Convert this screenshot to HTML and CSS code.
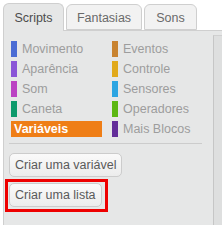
FILE: index.html
```html
<!DOCTYPE html>
<html>
<head>
<meta charset="utf-8">
<link rel="stylesheet" href="styles.css">
</head>
<body>
<div class="app">
  <div class="tabs">
    <div class="tab active">Scripts</div>
    <div class="tab wide">Fantasias</div>
    <div class="tab narrow">Sons</div>
  </div>
  <div class="panel">
    <div class="content">
      <div class="cats">
        <div class="cat"><span class="bar c-motion"></span>Movimento</div>
        <div class="cat"><span class="bar c-events"></span>Eventos</div>
        <div class="cat"><span class="bar c-looks"></span>Aparência</div>
        <div class="cat"><span class="bar c-control"></span>Controle</div>
        <div class="cat"><span class="bar c-sound"></span>Som</div>
        <div class="cat"><span class="bar c-sensing"></span>Sensores</div>
        <div class="cat"><span class="bar c-pen"></span>Caneta</div>
        <div class="cat"><span class="bar c-ops"></span>Operadores</div>
        <div class="cat selected">Variáveis</div>
        <div class="cat"><span class="bar c-more"></span>Mais Blocos</div>
      </div>
      <div class="sep"></div>
      <div class="buttons">
        <div class="btn">Criar uma variável</div>
        <div class="highlight"><div class="btn">Criar uma lista</div></div>
      </div>
    </div>
    <div class="scroll"></div>
  </div>
</div>
</body>
</html>
```
FILE: styles.css
```css
html, body {
  margin: 0;
  padding: 0;
  background: #ffffff;
}
body {
  font-family: "Liberation Sans", Arial, sans-serif;
  font-size: 12px;
  width: 222px;
  height: 225px;
  overflow: hidden;
}
.app {
  display: flex;
  flex-direction: column;
  height: 225px;
  padding-left: 3px;
  box-sizing: border-box;
}
.tabs {
  display: flex;
  gap: 2px;
  padding-top: 3px;
  height: 30px;
  box-sizing: border-box;
  align-items: flex-end;
  position: relative;
  z-index: 1;
}
.tab {
  height: 26px;
  box-sizing: border-box;
  border: 1px solid #cfcfcf;
  border-radius: 6px 6px 0 0;
  background: #f2f2f2;
  color: #6a6a6a;
  display: flex;
  align-items: center;
  justify-content: center;
  font-size: 12.5px;
  padding-top: 1px;
}
.tab.active {
  width: 61px;
  height: 28px;
  background: #e6e7e7;
  border-bottom: none;
  color: #4d4d4d;
  margin-bottom: -1px;
}
.tab.wide { width: 76px; }
.tab.narrow { width: 53px; }
.panel {
  flex: 1;
  display: flex;
  background: #e6e7e7;
  border-left: 1px solid #cfcfcf;
  border-top: 1px solid #cfcfcf;
}
.content {
  flex: 1;
  padding: 10px 0 0 7px;
}
.cats {
  display: grid;
  grid-template-columns: 101px 96px;
  row-gap: 4px;
}
.cat {
  height: 16px;
  display: flex;
  align-items: center;
  color: #9d9d9d;
  font-size: 12.5px;
}
.bar {
  width: 6px;
  height: 16px;
  margin-right: 5px;
}
.cat.selected {
  background: #ef7e16;
  color: #ffffff;
  font-weight: bold;
  padding-left: 3px;
  width: 91px;
  box-sizing: border-box;
}
.c-motion { background: #4a6cd4; }
.c-looks { background: #8a55d7; }
.c-sound { background: #bb42c3; }
.c-pen { background: #0e9a6c; }
.c-events { background: #c88330; }
.c-control { background: #e1a91a; }
.c-sensing { background: #2ca5e2; }
.c-ops { background: #5cb712; }
.c-more { background: #632d99; }
.sep {
  height: 1px;
  background: #cccccc;
  width: 193px;
  margin: 6px 0 0 -2px;
}
.buttons {
  display: flex;
  flex-direction: column;
  align-items: flex-start;
  gap: 6px;
  margin-top: 9px;
  margin-left: -2px;
}
.btn {
  height: 24px;
  box-sizing: border-box;
  border: 1px solid #cccccc;
  border-radius: 5px;
  background: linear-gradient(#fafafa, #ececec);
  color: #5a5a5a;
  padding: 0 5px;
  display: flex;
  align-items: center;
  font-size: 12.5px;
}
.highlight {
  border: 3px solid #ee0000;
  margin: -4px 0 0 -4px;
  padding: 1px 3px 2px 1px;
}
.scroll {
  width: 8px;
  margin-top: 4px;
  background: #dedfdf;
  border-left: 1px solid #c6c6c6;
  border-top: 1px solid #d0d0d0;
}
```
